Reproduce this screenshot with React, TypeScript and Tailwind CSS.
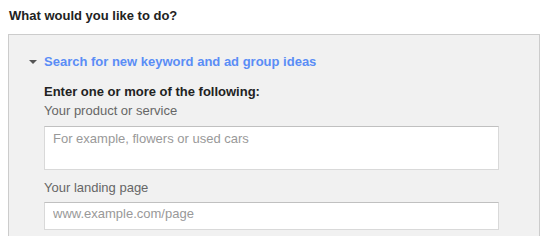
export default function App() {
  return (
    <div className="flex h-screen flex-col overflow-hidden bg-white font-['Liberation_Sans',Arial,sans-serif] text-[13px] leading-[16px]">
      <h1 className="pl-[9px] pt-[8px] font-bold text-[#222]">What would you like to do?</h1>

      {/* panel continues below the fold, so no bottom border shows */}
      <div className="ml-[8px] mt-[10px] w-[532px] flex-1 border border-b-0 border-[#cccccc] bg-[#f1f1f1] pt-[19px]">
        <div className="flex items-center pl-[20px]">
          <span className="mr-[7px] h-0 w-0 border-l-[4px] border-r-[4px] border-t-[4px] border-l-transparent border-r-transparent border-t-[#555]" />
          <a href="#" className="font-bold text-[#5a8df6]">
            Search for new keyword and ad group ideas
          </a>
        </div>

        <div className="pl-[35px] pr-[40px]">
          <div className="mt-[14px] font-bold text-[#222]">Enter one or more of the following:</div>

          <label className="mt-[3px] block text-[#666]">Your product or service</label>
          <textarea
            placeholder="For example, flowers or used cars"
            className="mt-[7px] block h-[44px] w-full resize-none border border-[#d9d9d9] border-t-[#c0c0c0] bg-white px-[8px] pt-[4px] leading-[16px] text-[#333] outline-none placeholder:text-[#999]"
          />

          <label className="mt-[10px] block text-[#666]">Your landing page</label>
          <input
            type="text"
            placeholder="www.example.com/page"
            className="mt-[6px] block w-full border border-[#d9d9d9] border-t-[#c0c0c0] bg-white px-[8px] pt-[3px] pb-[7px] leading-[16px] text-[#333] outline-none placeholder:text-[#999]"
          />
        </div>
      </div>
    </div>
  );
}
